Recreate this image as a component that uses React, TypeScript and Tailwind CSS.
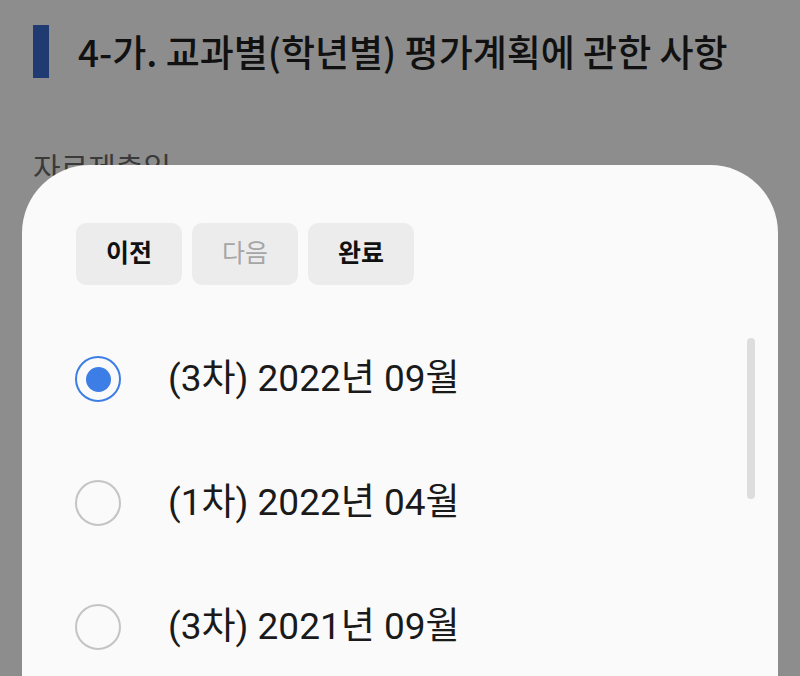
import React from "react";

const items = [
  { label: "(3차) 2022년 09월", selected: true },
  { label: "(1차) 2022년 04월", selected: false },
  { label: "(3차) 2021년 09월", selected: false },
];

export default function App() {
  return (
    <div
      className="relative w-[800px] h-[676px] overflow-hidden bg-[#8d8d8d]"
      style={{ fontFamily: "Roboto, 'Noto Sans CJK KR', sans-serif" }}
    >
      {/* underlying page (dimmed) */}
      <div className="pl-[33px] pr-[33px] pt-[25px]">
        <div className="flex items-center gap-[29px]">
          <div className="w-[16px] h-[53px] bg-[#203a72]" />
          <h1
            className="text-[37px] leading-[53px] font-medium text-[#111]"
            style={{ fontFamily: "'Noto Sans CJK KR', Roboto, sans-serif" }}
          >
            4-가. 교과별(학년별) 평가계획에 관한 사항
          </h1>
        </div>
        <div
          className="mt-[68px] text-[30px] leading-[40px] text-[#3a3a3a]"
          style={{ fontFamily: "'Noto Sans CJK KR', Roboto, sans-serif" }}
        >
          자료제출일
        </div>
        <div className="mt-[10px] h-[2px] w-[734px] bg-[#222]" />
      </div>

      {/* bottom sheet overlay */}
      <div className="absolute left-[22px] top-[165px] w-[756px] h-[560px] rounded-t-[68px] bg-[#fafafa] pt-[58px] pl-[54px]">
        <div className="flex gap-[10px]">
          <button className="w-[106px] h-[62px] rounded-[10px] bg-[#ececec] text-[25px] font-bold text-[#111]">
            이전
          </button>
          <button className="w-[106px] h-[62px] rounded-[10px] bg-[#ececec] text-[25px] font-normal text-[#a6a6a6]">
            다음
          </button>
          <button className="w-[106px] h-[62px] rounded-[10px] bg-[#ececec] text-[25px] font-bold text-[#111]">
            완료
          </button>
        </div>

        <div className="mt-[32px] flex flex-col">
          {items.map((it) => (
            <div key={it.label} className="h-[124px] flex items-center -ml-[1px]">
              {it.selected ? (
                <div className="w-[46px] h-[46px] rounded-full border-[2.5px] border-[#3d7ee6] flex items-center justify-center">
                  <div className="w-[25px] h-[25px] rounded-full bg-[#3d7ee6]" />
                </div>
              ) : (
                <div className="w-[46px] h-[46px] rounded-full border-[2px] border-[#c4c4c4]" />
              )}
              <span className="ml-[47px] text-[37px] text-[#1a1a1a]">{it.label}</span>
            </div>
          ))}
        </div>

        {/* scrollbar */}
        <div className="absolute left-[725px] top-[173px] w-[8px] h-[161px] rounded-full bg-[#dddddd]" />
      </div>
    </div>
  );
}
